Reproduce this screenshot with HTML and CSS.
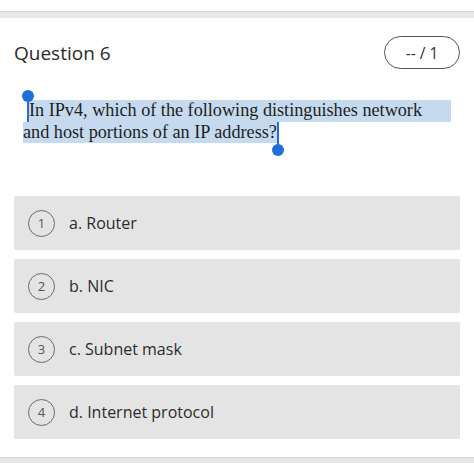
FILE: index.html
```html
<!DOCTYPE html>
<html lang="en">

<head>
    <meta charset="UTF-8">
    <meta name="viewport" content="width=device-width, initial-scale=1.0">
    <title>Question 6</title>
    <link rel="stylesheet" href="styles.css">
</head>

<body>
    <div class="top-bar"></div>

    <div class="question-head">
        <h2 class="question-title">Question 6</h2>
        <span class="score-pill">-- / 1</span>
    </div>

    <div class="question-text">
        <span class="sel-line first"><span class="handle start"></span>In IPv4, which of the following distinguishes network</span>
        <span class="sel-line last">and host portions of an IP address?<span class="handle end"></span></span>
    </div>

    <div class="answers">
        <div class="answer">
            <span class="answer-num">1</span>
            <span class="answer-label">a. Router</span>
        </div>
        <div class="answer">
            <span class="answer-num">2</span>
            <span class="answer-label">b. NIC</span>
        </div>
        <div class="answer">
            <span class="answer-num">3</span>
            <span class="answer-label">c. Subnet mask</span>
        </div>
        <div class="answer">
            <span class="answer-num">4</span>
            <span class="answer-label">d. Internet protocol</span>
        </div>
    </div>

    <div class="bottom-bar"></div>
</body>

</html>
```

FILE: styles.css
```css
body {
    margin: 0;
    background: #ffffff;
    font-family: "Open Sans", "Noto Sans", sans-serif;
    color: #333;
    overflow: hidden;
}

.top-bar {
    margin-top: 11px;
    height: 6px;
    background: #e8e8e8;
    border-top: 1px solid #d4d4d4;
}

.question-head {
    display: flex;
    justify-content: space-between;
    align-items: center;
    margin-top: 18px;
    padding: 0 14px;
}

.question-title {
    margin: 0;
    font-size: 19px;
    font-weight: 400;
    color: #2a2a2a;
}

.score-pill {
    display: flex;
    align-items: center;
    justify-content: center;
    box-sizing: border-box;
    width: 76px;
    height: 33px;
    border: 1.5px solid #555;
    border-radius: 17px;
    font-size: 15.5px;
    color: #333;
}

/* selected question text */

.question-text {
    margin-top: 31px;
    padding-left: 23px;
    font-family: "Liberation Serif", "Times New Roman", serif;
    font-size: 18.2px;
    line-height: 21.5px;
    color: #1e1e1e;
}

.sel-line {
    position: relative;
    display: block;
    background: #c6daef;
}

.sel-line.first {
    width: 424px;
    margin-left: 4px;
    padding-left: 2px;
    box-sizing: border-box;
}

.sel-line.last {
    display: inline-block;
}

.handle {
    position: absolute;
    width: 2px;
    background: #1f6fd6;
}

.handle::after {
    content: "";
    position: absolute;
    left: -5px;
    width: 12px;
    height: 12px;
    border-radius: 50%;
    background: #1f6fd6;
}

.handle.start {
    left: 0;
    top: -4px;
    height: 26px;
}

.handle.start::after {
    top: -6px;
}

.handle.end {
    right: -2px;
    top: 0;
    height: 28px;
}

.handle.end::after {
    bottom: -6px;
}

/* answers */

.answers {
    display: flex;
    flex-direction: column;
    gap: 9px;
    margin-top: 53px;
    padding: 0 14px;
}

.answer {
    display: flex;
    align-items: center;
    height: 54px;
    padding-left: 14px;
    background: #e4e4e4;
    border-radius: 2px;
}

.answer-num {
    display: flex;
    align-items: center;
    justify-content: center;
    box-sizing: border-box;
    width: 27px;
    height: 27px;
    border: 1.5px solid #6a6a6a;
    border-radius: 50%;
    font-size: 13px;
    color: #555;
}

.answer-label {
    margin-left: 14px;
    font-size: 16px;
    color: #2c2c2c;
}

.bottom-bar {
    margin-top: 18px;
    height: 8px;
    background: #e8e8e8;
    border-top: 1px solid #d4d4d4;
}
```
